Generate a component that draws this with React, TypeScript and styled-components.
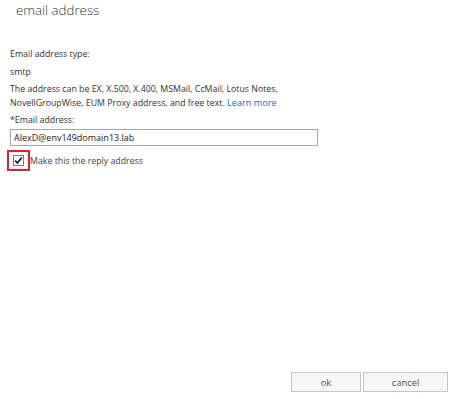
import styled, { createGlobalStyle } from "styled-components";

const GlobalStyle = createGlobalStyle`
  html, body {
    margin: 0;
    padding: 0;
    background: #fff;
  }
  body {
    font-family: "Open Sans", "Noto Sans", sans-serif;
    color: #333;
  }
`;

const Page = styled.div`
  width: 474px;
  height: 399px;
  display: flex;
  flex-direction: column;
  box-sizing: border-box;
`;

const Title = styled.h1`
  margin: 0;
  padding: 0 0 0 16px;
  font-size: 13.3px;
  font-weight: 300;
  line-height: 20px;
  color: #333;
`;

const Form = styled.div`
  padding: 28px 0 0 10px;
  display: flex;
  flex-direction: column;
`;

const Text = styled.div<{ $gap?: number }>`
  font-size: 8.8px;
  line-height: 13px;
  color: #333;
  margin-bottom: ${(p) => p.$gap ?? 5}px;
`;

const Link = styled.a`
  color: #1c6bb5;
  text-decoration: none;
  font-size: 9.2px;
`;

const Input = styled.input`
  width: 308px;
  height: 17px;
  box-sizing: border-box;
  border: 1px solid #a6a6a6;
  padding: 0 3px;
  font-family: "Open Sans", "Noto Sans", sans-serif;
  font-size: 9px;
  color: #222;
  outline: none;
`;

const CheckRow = styled.label`
  display: flex;
  align-items: center;
  margin: 4px 0 0 -3px;
  font-size: 8.8px;
  color: #444;
`;

const Highlight = styled.span`
  width: 23px;
  height: 21px;
  box-sizing: border-box;
  border: 2px solid #d9232e;
  display: flex;
  align-items: center;
  justify-content: center;
`;

const Box = styled.span`
  width: 11px;
  height: 11px;
  box-sizing: border-box;
  border: 1px solid #7a7a7a;
  background: #fff;
  display: flex;
  align-items: center;
  justify-content: center;
`;

const Footer = styled.div`
  margin-top: auto;
  display: flex;
  justify-content: flex-end;
  gap: 2px;
  padding: 0 26px 7px 0;
`;

const Button = styled.button<{ $w: number }>`
  width: ${(p) => p.$w}px;
  height: 20px;
  border: 1px solid #c6c6c6;
  background: #f6f6f6;
  font-family: "Open Sans", "Noto Sans", sans-serif;
  font-size: 9.4px;
  color: #555;
  padding: 0;
`;

export default function App() {
  return (
    <Page>
      <GlobalStyle />
      <Title>email address</Title>
      <Form>
        <Text>Email address type:</Text>
        <Text $gap={4}>smtp</Text>
        <Text $gap={4}>
          The address can be EX, X.500, X.400, MSMail, CcMail, Lotus Notes,
          <br />
          NovellGroupWise, EUM Proxy address, and free text.{" "}
          <Link href="#">Learn more</Link>
        </Text>
        <Text $gap={2}>*Email address:</Text>
        <Input defaultValue="AlexD@env149domain13.lab" />
        <CheckRow>
          <Highlight>
            <Box>
              <svg width="9" height="9" viewBox="0 0 9 9">
                <path d="M1.2 4.6 L3.4 7 L7.8 1.4" fill="none" stroke="#111" strokeWidth="1.6" />
              </svg>
            </Box>
          </Highlight>
          Make this the reply address
        </CheckRow>
      </Form>
      <Footer>
        <Button $w={70}>ok</Button>
        <Button $w={85}>cancel</Button>
      </Footer>
    </Page>
  );
}
